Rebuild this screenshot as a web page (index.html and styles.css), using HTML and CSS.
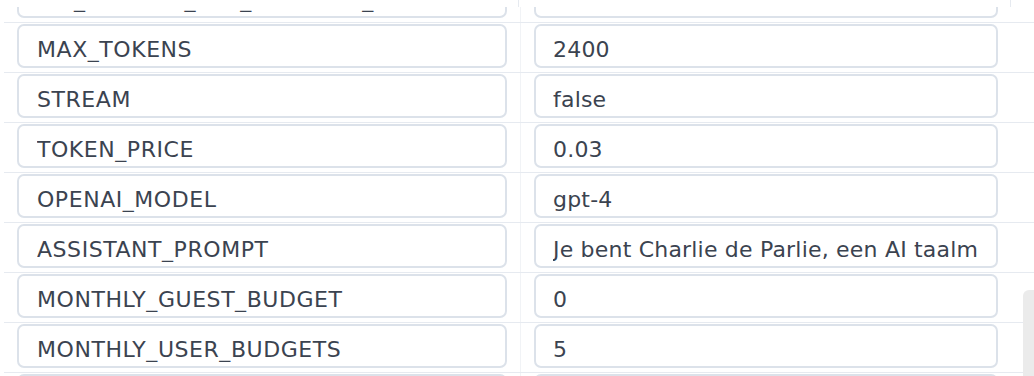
FILE: index.html
```html
<!DOCTYPE html>
<html lang="nl">
<head>
<meta charset="utf-8">
<title>Settings</title>
<link rel="stylesheet" href="styles.css">
</head>
<body>
<div class="sticky-head">
  <div class="head-cell key"></div>
  <div class="head-cell val"></div>
</div>
<div class="table">
  <div class="row">
    <div class="cell key"><input class="field" value="MD_HISTORY_PER_MESSAGE_COUNT"></div>
    <div class="cell val"><input class="field" value="10"></div>
    <div class="cell end"></div>
  </div>
  <div class="row">
    <div class="cell key"><input class="field" value="MAX_TOKENS"></div>
    <div class="cell val"><input class="field" value="2400"></div>
    <div class="cell end"></div>
  </div>
  <div class="row">
    <div class="cell key"><input class="field" value="STREAM"></div>
    <div class="cell val"><input class="field" value="false"></div>
    <div class="cell end"></div>
  </div>
  <div class="row">
    <div class="cell key"><input class="field" value="TOKEN_PRICE"></div>
    <div class="cell val"><input class="field" value="0.03"></div>
    <div class="cell end"></div>
  </div>
  <div class="row">
    <div class="cell key"><input class="field" value="OPENAI_MODEL"></div>
    <div class="cell val"><input class="field" value="gpt-4"></div>
    <div class="cell end"></div>
  </div>
  <div class="row">
    <div class="cell key"><input class="field" value="ASSISTANT_PROMPT"></div>
    <div class="cell val"><input class="field" value="Je bent Charlie de Parlie, een AI taalmodel dat vragen beantwoordt."></div>
    <div class="cell end"></div>
  </div>
  <div class="row">
    <div class="cell key"><input class="field" value="MONTHLY_GUEST_BUDGET"></div>
    <div class="cell val"><input class="field" value="0"></div>
    <div class="cell end"></div>
  </div>
  <div class="row">
    <div class="cell key"><input class="field" value="MONTHLY_USER_BUDGETS"></div>
    <div class="cell val"><input class="field" value="5"></div>
    <div class="cell end"></div>
  </div>
  <div class="row">
    <div class="cell key"><input class="field" value="MONTHLY_ADMIN_BUDGET"></div>
    <div class="cell val"><input class="field" value="10"></div>
    <div class="cell end"></div>
  </div>
</div>
<div class="scroll-thumb"></div>
</body>
</html>
```

FILE: styles.css
```css
html, body {
  margin: 0;
  padding: 0;
  background: #ffffff;
  overflow: hidden;
  height: 376px;
}

body {
  font-family: "DejaVu Sans", Verdana, sans-serif;
  position: relative;
}

.sticky-head {
  position: absolute;
  top: 0;
  left: 4px;
  height: 7px;
  display: grid;
  grid-template-columns: 515px 492px;
  z-index: 2;
}

.head-cell {
  background: #ffffff;
}

.head-cell.key {
  border-right: 1px solid #e6eaf0;
}

.head-cell.val {
  border-right: 1px solid #e6eaf0;
}

.table {
  margin-top: -28px;
  padding-left: 4px;
}

.row {
  display: grid;
  grid-template-columns: 516px 491px 23px;
  border-top: 1px solid #e6eaf0;
}

.cell {
  padding: 1px 13px 4px 13px;
  box-sizing: border-box;
}

.cell.val {
  border-left: 1px solid #f1f3f6;
}

.cell.end {
  padding: 0;
}

.field {
  display: block;
  width: 100%;
  height: 44px;
  box-sizing: border-box;
  margin: 0;
  border: 2px solid #dce2ea;
  border-radius: 7px;
  padding: 6px 18px 0 18px;
  background: #ffffff;
  color: #3b4350;
  font-family: "DejaVu Sans", Verdana, sans-serif;
  font-size: 22px;
  letter-spacing: 0.2px;
  outline: none;
}

.cell.key .field {
  letter-spacing: 0.55px;
}

.cell.val .field {
  padding-left: 17px;
}

.scroll-thumb {
  position: absolute;
  right: 0;
  top: 290px;
  width: 11px;
  height: 120px;
  background: #ebebeb;
  border-radius: 6px 0 0 0;
}
```
